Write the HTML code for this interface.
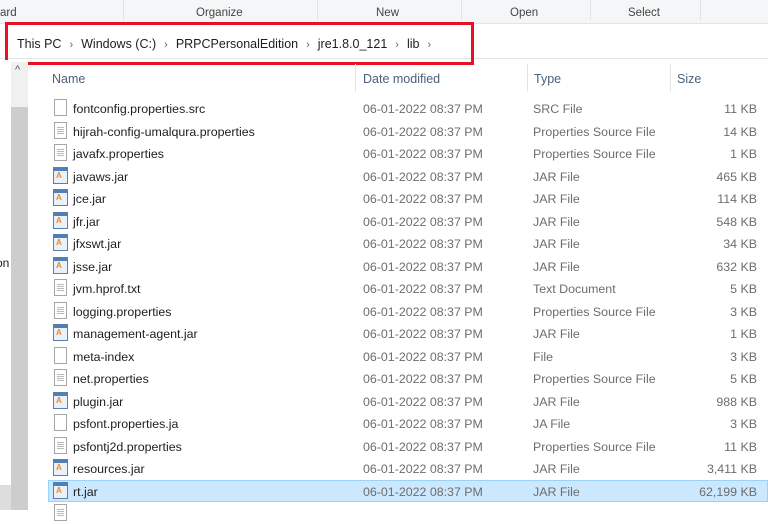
<!DOCTYPE html>
<html><head><meta charset="utf-8"><style>
*{margin:0;padding:0;box-sizing:border-box}
body{width:768px;height:510px;overflow:hidden;background:#fff;font-family:"Liberation Sans",sans-serif;font-size:12.4px;color:#1e1e1e;position:relative}
.rib{position:absolute;left:0;top:0;width:768px;height:24px;background:#f5f6f7;border-bottom:1px solid #e3e3e3;color:#444;font-size:11.5px}
.rib span{position:absolute;top:7px}
.rib i{position:absolute;top:0;width:1px;height:20px;background:#e2e3e4}
.addr{position:absolute;left:0;top:26px;width:768px;height:33px;background:#fff;border-bottom:1px solid #e5e5e5}
.red{position:absolute;left:5px;top:22px;width:469px;height:43px;border:3px solid #e81123}
.crumb{position:absolute;top:37px;left:17px;font-size:12.5px;color:#1e1e1e;white-space:nowrap}
.crumb b{font-weight:normal;color:#666;margin:0 8px;font-size:11px}
.nav{position:absolute;left:0;top:60px;width:11px;height:450px;background:#fff}
.sb{position:absolute;left:11px;top:62px;width:17px;height:448px;background:#f0f0f0}
.sb .th{position:absolute;left:0;top:45px;width:17px;height:403px;background:#cdcdcd}
.hdr{position:absolute;top:72px;height:22px;color:#4c607a;font-size:12.5px}
.hs{position:absolute;top:64px;width:1px;height:28px;background:#e5e5e5}
.row{position:absolute;left:48px;width:720px;height:22px}
.row.sel{background:#cce8ff;border:1px solid #99d1ff}
.row span{position:absolute;top:5px;white-space:nowrap}
.n{left:25px}.d{left:315px;color:#6d6d6d}.t{left:485px;color:#6d6d6d}.s{right:11px;color:#6d6d6d}
.ic{position:absolute;left:6px;top:2px;width:13px;height:17px;border:1px solid #a6a6a6;background:#fff}
.ic.tx::after{content:"";position:absolute;left:2px;top:4px;width:7px;height:7px;background:repeating-linear-gradient(#bbb 0 1px,transparent 1px 2px)}
.ic.jar{width:15px;left:5px;border-color:#5a7fa8;background:linear-gradient(#4f7fb6 0 3px,#e9f1fa 3px)}
.ic.jar::after{content:"A";position:absolute;left:2px;top:3px;font-size:8px;color:#f08a24;font-weight:bold}
</style></head><body>
<div class="rib">
<span style="left:0">ard</span><i style="left:123px"></i>
<span style="left:196px">Organize</span><i style="left:317px"></i>
<span style="left:376px">New</span><i style="left:461px"></i>
<span style="left:510px">Open</span><i style="left:590px"></i>
<span style="left:628px">Select</span><i style="left:700px"></i>
</div>
<div class="addr"></div>
<div class="crumb">This PC<b>›</b>Windows (C:)<b>›</b>PRPCPersonalEdition<b>›</b>jre1.8.0_121<b>›</b>lib<b>›</b></div>
<div class="red"></div>
<div class="nav"><span style="position:absolute;left:-4px;top:196px;font-size:12px">on</span></div>
<div class="sb"><span style="position:absolute;left:4px;top:2px;font-size:11px;color:#555">^</span><div class="th"></div></div>
<div style="position:absolute;left:0;top:485px;width:11px;height:25px;background:#ddd"></div>
<div class="hdr" style="left:52px">Name</div>
<div class="hs" style="left:355px"></div>
<div class="hdr" style="left:363px">Date modified</div>
<div class="hs" style="left:527px"></div>
<div class="hdr" style="left:534px">Type</div>
<div class="hs" style="left:670px"></div>
<div class="hdr" style="left:677px">Size</div>

<div class="row" style="top:97px"><div class="ic"></div><span class="n">fontconfig.properties.src</span><span class="d">06-01-2022 08:37 PM</span><span class="t">SRC File</span><span class="s">11 KB</span></div>
<div class="row" style="top:119.5px"><div class="ic tx"></div><span class="n">hijrah-config-umalqura.properties</span><span class="d">06-01-2022 08:37 PM</span><span class="t">Properties Source File</span><span class="s">14 KB</span></div>
<div class="row" style="top:142px"><div class="ic tx"></div><span class="n">javafx.properties</span><span class="d">06-01-2022 08:37 PM</span><span class="t">Properties Source File</span><span class="s">1 KB</span></div>
<div class="row" style="top:164.5px"><div class="ic jar"></div><span class="n">javaws.jar</span><span class="d">06-01-2022 08:37 PM</span><span class="t">JAR File</span><span class="s">465 KB</span></div>
<div class="row" style="top:187px"><div class="ic jar"></div><span class="n">jce.jar</span><span class="d">06-01-2022 08:37 PM</span><span class="t">JAR File</span><span class="s">114 KB</span></div>
<div class="row" style="top:209.5px"><div class="ic jar"></div><span class="n">jfr.jar</span><span class="d">06-01-2022 08:37 PM</span><span class="t">JAR File</span><span class="s">548 KB</span></div>
<div class="row" style="top:232px"><div class="ic jar"></div><span class="n">jfxswt.jar</span><span class="d">06-01-2022 08:37 PM</span><span class="t">JAR File</span><span class="s">34 KB</span></div>
<div class="row" style="top:254.5px"><div class="ic jar"></div><span class="n">jsse.jar</span><span class="d">06-01-2022 08:37 PM</span><span class="t">JAR File</span><span class="s">632 KB</span></div>
<div class="row" style="top:277px"><div class="ic tx"></div><span class="n">jvm.hprof.txt</span><span class="d">06-01-2022 08:37 PM</span><span class="t">Text Document</span><span class="s">5 KB</span></div>
<div class="row" style="top:299.5px"><div class="ic tx"></div><span class="n">logging.properties</span><span class="d">06-01-2022 08:37 PM</span><span class="t">Properties Source File</span><span class="s">3 KB</span></div>
<div class="row" style="top:322px"><div class="ic jar"></div><span class="n">management-agent.jar</span><span class="d">06-01-2022 08:37 PM</span><span class="t">JAR File</span><span class="s">1 KB</span></div>
<div class="row" style="top:344.5px"><div class="ic"></div><span class="n">meta-index</span><span class="d">06-01-2022 08:37 PM</span><span class="t">File</span><span class="s">3 KB</span></div>
<div class="row" style="top:367px"><div class="ic tx"></div><span class="n">net.properties</span><span class="d">06-01-2022 08:37 PM</span><span class="t">Properties Source File</span><span class="s">5 KB</span></div>
<div class="row" style="top:389.5px"><div class="ic jar"></div><span class="n">plugin.jar</span><span class="d">06-01-2022 08:37 PM</span><span class="t">JAR File</span><span class="s">988 KB</span></div>
<div class="row" style="top:412px"><div class="ic"></div><span class="n">psfont.properties.ja</span><span class="d">06-01-2022 08:37 PM</span><span class="t">JA File</span><span class="s">3 KB</span></div>
<div class="row" style="top:434.5px"><div class="ic tx"></div><span class="n">psfontj2d.properties</span><span class="d">06-01-2022 08:37 PM</span><span class="t">Properties Source File</span><span class="s">11 KB</span></div>
<div class="row" style="top:457px"><div class="ic jar"></div><span class="n">resources.jar</span><span class="d">06-01-2022 08:37 PM</span><span class="t">JAR File</span><span class="s">3,411 KB</span></div>
<div class="row sel" style="top:480px"><div class="ic jar" style="left:4px;top:1px"></div><span class="n" style="left:24px;top:4px">rt.jar</span><span class="d" style="left:314px;top:4px">06-01-2022 08:37 PM</span><span class="t" style="left:484px;top:4px">JAR File</span><span class="s" style="right:10px;top:4px">62,199 KB</span></div>
<div class="row" style="top:502px"><div class="ic tx"></div></div>
</body></html>
